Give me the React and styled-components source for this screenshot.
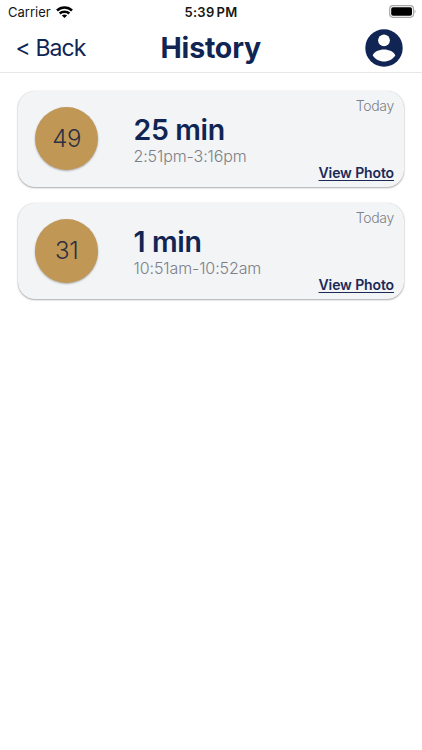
import React from "react";
import styled, { createGlobalStyle } from "styled-components";

const navy = "#102554";

const GlobalStyle = createGlobalStyle`
  * { box-sizing: border-box; }
  body {
    margin: 0;
    background: #fff;
    font-family: Inter, "Liberation Sans", sans-serif;
  }
`;

const Screen = styled.div`
  min-height: 750px;
  background: #fff;
`;

const StatusBar = styled.div`
  display: grid;
  grid-template-columns: 1fr auto 1fr;
  align-items: center;
  height: 24px;
  padding: 0 6px 0 8px;
  font-size: 13px;
  line-height: 24px;
  color: #161616;
`;

const Carrier = styled.div`
  display: flex;
  align-items: center;
  gap: 5px;
`;

const Clock = styled.div`
  margin-right: 2px;
  font-weight: 600;
  letter-spacing: 0.3px;
  word-spacing: -1.5px;
`;

const Battery = styled.svg`
  justify-self: end;
  margin-bottom: 1px;
`;

const Header = styled.header`
  display: grid;
  grid-template-columns: 1fr auto 1fr;
  align-items: center;
  height: 49px;
  padding: 0 19px 1px 15.5px;
  border-bottom: 1px solid #e6e7e8;
  color: ${navy};
`;

const BackButton = styled.button`
  justify-self: start;
  padding: 0;
  border: 0;
  background: none;
  color: inherit;
  font: 400 23px/30px Inter, sans-serif;
  letter-spacing: -0.9px;
`;

const Title = styled.h1`
  margin: 0 0 0 3px;
  font-size: 28.5px;
  line-height: 34px;
  font-weight: 700;
  letter-spacing: -0.2px;
`;

const Avatar = styled.svg`
  justify-self: end;
  margin-right: 0.3px;
`;

const List = styled.main`
  display: flex;
  flex-direction: column;
  gap: 16.4px;
  padding: 18px;
`;

const Card = styled.article`
  display: flex;
  height: 96px;
  padding: 0 10px 0 17px;
  border-radius: 17px;
  background: #f2f4f6;
  box-shadow: 0 1px 2px rgba(0, 0, 0, 0.32), 0 0 1px rgba(0, 0, 0, 0.2);
`;

const Badge = styled.div`
  flex: none;
  width: 63.4px;
  height: 63.4px;
  margin: 16px 35.1px 0 0;
  border-radius: 50%;
  background: #c19755;
  box-shadow: 0 1px 2px rgba(0, 0, 0, 0.3);
  color: #2b3043;
  font-size: 24px;
  font-weight: 300;
  line-height: 63.400px;
  letter-spacing: -0.4px;
  text-align: center;
`;

const Details = styled.div`
  flex: 1;
  padding-top: 22px;
`;

const Duration = styled.div`
  font-size: 28.5px;
  font-weight: 600;
  line-height: 34px;
  color: ${navy};
  letter-spacing: -0.35px;
`;

const Period = styled.div`
  font-size: 16px;
  font-weight: 300;
  line-height: 19px;
  color: #7d8087;
  letter-spacing: -0.1px;
`;

const Aside = styled.div`
  display: flex;
  flex-direction: column;
  justify-content: space-between;
  align-items: flex-end;
  padding: 6px 0 5px;
`;

const Day = styled.div`
  font-size: 14px;
  font-weight: 300;
  line-height: 18px;
  color: #7d8087;
  letter-spacing: -0.3px;
`;

const PhotoLink = styled.a`
  font-size: 14px;
  font-weight: 600;
  line-height: 18px;
  color: #1c2957;
  letter-spacing: -0.12px;
  text-decoration: underline;
  text-decoration-thickness: 1px;
  text-underline-offset: 2px;
  text-decoration-skip-ink: none;
`;

const sessions = [
  { number: 49, duration: "25 min", period: "2:51pm-3:16pm", day: "Today" },
  { number: 31, duration: "1 min", period: "10:51am-10:52am", day: "Today" },
];

function WifiIcon() {
  return (
    <svg width="17" height="12" viewBox="0 0 17 12" fill="none" stroke="#000" strokeWidth="2.6">
      <path d="M1 4.500C5.200.500 11.800.500 16 4.500" />
      <path d="M3.700 7.500C6.300 5.100 10.700 5.100 13.300 7.500" />
      <path d="M8.500 12 5.900 9.500c1.500-1.300 3.700-1.300 5.200 0Z" fill="#000" stroke="none" />
    </svg>
  );
}

export default function App() {
  return (
    <Screen>
      <GlobalStyle />
      <StatusBar>
        <Carrier>
          Carrier <WifiIcon />
        </Carrier>
        <Clock>5:39 PM</Clock>
        <Battery width="27" height="13" viewBox="0 0 27 13">
          <rect x="0.7" y="0.7" width="23.8" height="11.6" rx="3.2" fill="#fff" stroke="#a6a6a6" strokeWidth="1.2" />
          <rect x="2.2" y="2.2" width="20.8" height="8.6" rx="1.8" fill="#000" />
          <path d="M25.6 4.7c1.3.5 1.3 3.1 0 3.6Z" fill="#a6a6a6" />
        </Battery>
      </StatusBar>
      <Header>
        <BackButton>&lt; Back</BackButton>
        <Title>History</Title>
        <Avatar width="38" height="38" viewBox="0 0 38 38">
          <circle cx="19" cy="19" r="18.7" fill={navy} />
          <circle cx="19" cy="11.3" r="5.9" fill="#fff" />
          <path d="M7.700 26.400C8.700 22.700 14.200 20.400 19 20.400s10.300 2.300 11.300 6C27.800 30.200 23.800 32.400 19 32.400S10.200 30.200 7.700 26.400Z" fill="#fff" />
        </Avatar>
      </Header>
      <List>
        {sessions.map((s) => (
          <Card key={s.number}>
            <Badge>{s.number}</Badge>
            <Details>
              <Duration>{s.duration}</Duration>
              <Period>{s.period}</Period>
            </Details>
            <Aside>
              <Day>{s.day}</Day>
              <PhotoLink>View Photo</PhotoLink>
            </Aside>
          </Card>
        ))}
      </List>
    </Screen>
  );
}
